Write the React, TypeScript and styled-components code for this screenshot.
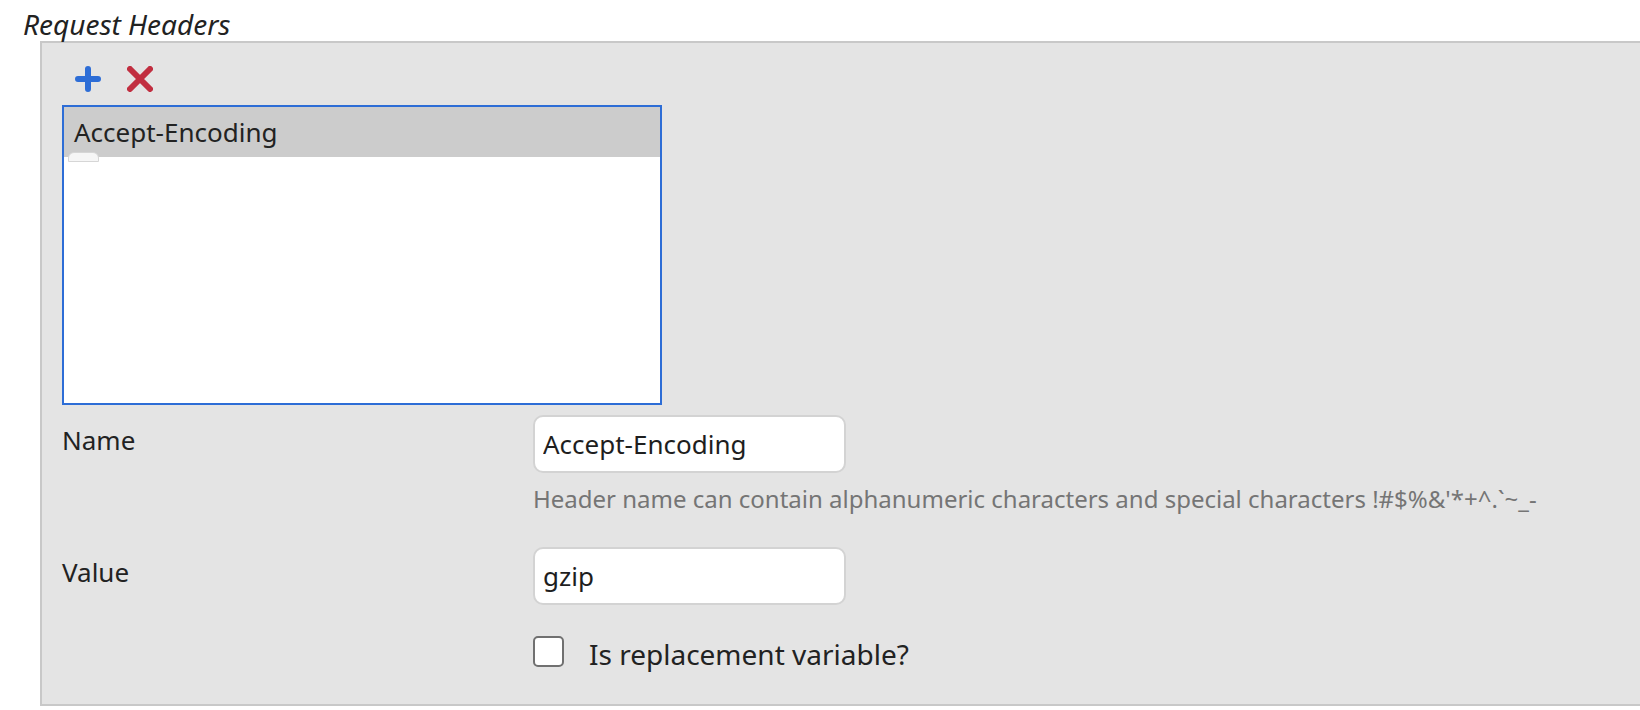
import styled, { createGlobalStyle } from "styled-components"

const GlobalStyle = createGlobalStyle`
	html, body {
		margin: 0;
		padding: 0;
		background: #ffffff;
		overflow: hidden;
	}
	body {
		font-family: "Noto Sans", "Open Sans", sans-serif;
		color: #222222;
	}
`

const Page = styled.div`
	width: 1640px;
	height: 710px;
	padding-top: 7px;
	box-sizing: border-box;
`

const SectionTitle = styled.div`
	font-style: italic;
	font-size: 28px;
	line-height: 34px;
	height: 34px;
	padding-left: 23px;
	color: #222222;
`

const Panel = styled.div`
	margin-left: 40px;
	background: #e4e4e4;
	border: 2px solid #c8c8c8;
	border-right: none;
	padding: 10px 0 32px 20px;
`

const Toolbar = styled.div`
	display: flex;
	height: 52px;
`

const ToolButton = styled.button`
	width: 52px;
	height: 52px;
	padding: 0;
	border: none;
	background: transparent;
	display: flex;
	align-items: center;
	justify-content: center;
	cursor: pointer;
`

const ListBox = styled.div`
	position: relative;
	width: 600px;
	height: 300px;
	box-sizing: border-box;
	border: 2px solid #2d6dd6;
	background: #ffffff;
`

const ListItem = styled.div<{ $selected?: boolean }>`
	height: 50px;
	line-height: 50px;
	padding-left: 10px;
	font-size: 26px;
	background: ${(p) => (p.$selected ? "#cccccc" : "transparent")};
`

// small handle peeking out under the selected row
const RowHandle = styled.div`
	position: absolute;
	left: 4px;
	top: 45px;
	width: 31px;
	height: 10px;
	box-sizing: border-box;
	background: #f6f6f6;
	border: 1px solid #d6d6d6;
	border-radius: 6px 6px 0 0;
`

const FormRow = styled.div<{ $gap: number }>`
	display: grid;
	grid-template-columns: 471px 1fr;
	margin-top: ${(p) => p.$gap}px;
`

const FieldLabel = styled.div`
	font-size: 26px;
	line-height: 36px;
	padding-top: 7px;
	color: #222222;
`

const FieldColumn = styled.div`
	display: flex;
	flex-direction: column;
	align-items: flex-start;
`

const TextInput = styled.input`
	width: 313px;
	height: 58px;
	box-sizing: border-box;
	border: 2px solid #d3d3d3;
	border-radius: 10px;
	background: #ffffff;
	padding: 0 8px;
	font-family: "Noto Sans", "Open Sans", sans-serif;
	font-size: 26px;
	color: #1e1e1e;
	outline: none;
`

const HelpText = styled.div`
	margin-top: 10px;
	font-size: 24px;
	line-height: 32px;
	color: #757575;
	white-space: nowrap;
`

const CheckRow = styled.label`
	display: flex;
	align-items: flex-start;
	gap: 25px;
	cursor: pointer;
`

const CheckBox = styled.span`
	flex: none;
	width: 31px;
	height: 31px;
	box-sizing: border-box;
	border: 2px solid #707070;
	border-radius: 5px;
	background: #ffffff;
`

const CheckText = styled.span`
	font-size: 28px;
	line-height: 36px;
	color: #222222;
`

const PlusIcon = () => (
	<svg width="26" height="26" viewBox="0 0 26 26">
		<path d="M13 3 V23 M3 13 H23" stroke="#2d6dd6" strokeWidth="6" strokeLinecap="round" fill="none" />
	</svg>
)

const CrossIcon = () => (
	<svg width="26" height="26" viewBox="0 0 26 26">
		<path d="M3 3 L23 23 M23 3 L3 23" stroke="#c12e40" strokeWidth="6" strokeLinecap="round" fill="none" />
	</svg>
)

const App = () => {
	return (
		<Page>
			<GlobalStyle />
			<SectionTitle>Request Headers</SectionTitle>
			<Panel>
				<Toolbar>
					<ToolButton title="Add header">
						<PlusIcon />
					</ToolButton>
					<ToolButton title="Remove header">
						<CrossIcon />
					</ToolButton>
				</Toolbar>

				<ListBox>
					<ListItem $selected>Accept-Encoding</ListItem>
					<RowHandle />
				</ListBox>

				<FormRow $gap={10}>
					<FieldLabel>Name</FieldLabel>
					<FieldColumn>
						<TextInput defaultValue="Accept-Encoding" />
						<HelpText>Header name can contain alphanumeric characters and special characters !#$%&amp;'*+^.`~_-</HelpText>
					</FieldColumn>
				</FormRow>

				<FormRow $gap={32}>
					<FieldLabel>Value</FieldLabel>
					<FieldColumn>
						<TextInput defaultValue="gzip" />
					</FieldColumn>
				</FormRow>

				<FormRow $gap={31}>
					<div />
					<CheckRow>
						<CheckBox />
						<CheckText>Is replacement variable?</CheckText>
					</CheckRow>
				</FormRow>
			</Panel>
		</Page>
	)
}

export default App
